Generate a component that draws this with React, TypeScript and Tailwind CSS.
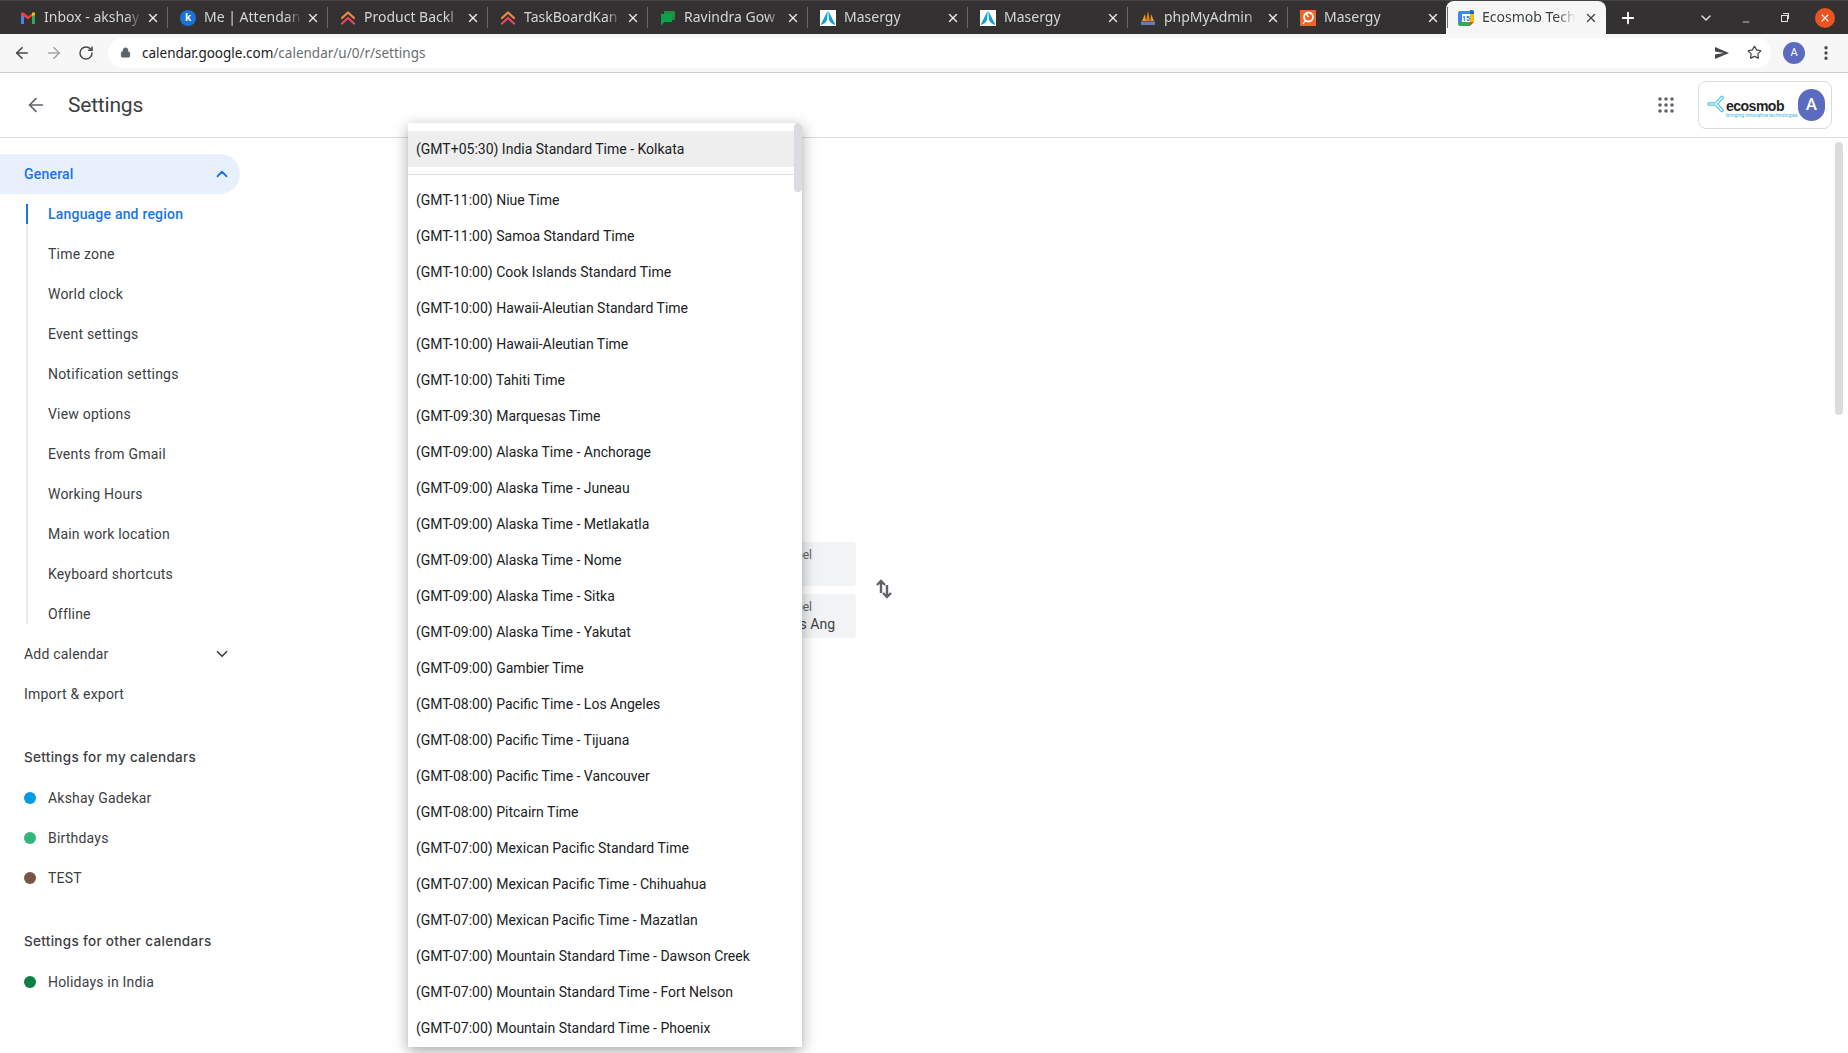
import React from "react";
import { ArrowLeft, ArrowRight, RotateCw, Lock, Star, ChevronUp, ChevronDown, X, Plus, Minus, EllipsisVertical } from "lucide-react";

const Gmail = () => (
  <svg width="16" height="16" viewBox="0 0 16 16" fill="none">
    <path d="M1 14V4l3 2.2V14H2a1 1 0 0 1-1-1z" fill="#4285f4" />
    <path d="M15 14V4l-3 2.2V14h2a1 1 0 0 0 1-1z" fill="#34a853" />
    <path d="M1 5V3.6C1 2.4 2.4 1.8 3.3 2.5L8 6l-.1 3L1 5z" fill="#ea4335" />
    <path d="M4 6.2 8 9.2l4-3V3.4L8 6.4 4 3.4z" fill="#ea4335" />
    <path d="M15 5V3.6c0-1.2-1.4-1.8-2.3-1.1L12 3v3.2L15 5z" fill="#fbbc04" />
  </svg>
);
const Keka = () => (
  <div className="w-4 h-4 rounded-full bg-[#1a73d8] flex items-center justify-center text-white text-[11px] font-bold leading-none font-['Liberation_Sans',sans-serif]">k</div>
);
const Chevrons = () => (
  <svg width="16" height="16" viewBox="0 0 16 16" fill="none" strokeWidth="2.2" strokeLinecap="round" strokeLinejoin="round">
    <path d="M2 8 8 2.5 14 8" stroke="#f58a42" />
    <path d="M2 13.5 8 8l6 5.5" stroke="#ef4565" />
  </svg>
);
const Chat = () => (
  <svg width="16" height="16" viewBox="0 0 16 16">
    <path d="M4 1h10a1 1 0 0 1 1 1v7a1 1 0 0 1-1 1H4z" fill="#1e8e3e" />
    <path d="M1 4h10a1 1 0 0 1 1 1v6a1 1 0 0 1-1 1H4.5L1 15.5z" fill="#0fa04a" />
  </svg>
);
const Masergy = () => (
  <svg width="16" height="16" viewBox="0 0 16 16">
    <rect width="16" height="16" fill="#fff" />
    <path d="M7.6 1 .5 15c3-.4 5.4-2.2 6.6-5.4z" fill="#159fd6" />
    <path d="M8.4 1 15.5 15c-3-.4-5.4-2.2-6.6-5.4z" fill="#159fd6" />
  </svg>
);
const Pma = () => (
  <svg width="16" height="16" viewBox="0 0 16 16">
    <path d="M2 11 5 4l1 7z" fill="#f29a1f" />
    <path d="M6 11 8 1l2 10z" fill="#e8791a" />
    <path d="M10.5 11 11 4l3 7z" fill="#f29a1f" />
    <rect x="1" y="11.5" width="14" height="3.5" fill="#6c78af" />
  </svg>
);
const Clockish = () => (
  <svg width="16" height="16" viewBox="0 0 16 16" fill="none">
    <rect width="16" height="16" fill="#f4622a" />
    <circle cx="8.5" cy="7" r="4.5" stroke="#fff" strokeWidth="1.8" />
    <path d="M8.5 7 6 3.8" stroke="#fff" strokeWidth="1.4" />
    <path d="M3 14c1-2 2-3 3-3.6" stroke="#fff" strokeWidth="1.2" />
  </svg>
);
const Cal = () => (
  <svg width="16" height="16" viewBox="0 0 16 16">
    <rect width="16" height="16" rx="1.5" fill="#fff" />
    <path d="M0 3a2 2 0 0 1 2-2h10v3H4v8H0z" fill="#4285f4" />
    <path d="M12 0h2a2 2 0 0 1 2 2v2h-4z" fill="#1967d2" />
    <rect x="12" y="4" width="4" height="8" fill="#fbbc04" />
    <path d="M0 12h12v4H2a2 2 0 0 1-2-2z" fill="#34a853" />
    <path d="M12 12h4l-4 4z" fill="#ea4335" />
    <text x="8" y="10.5" fontSize="7" fontWeight="700" textAnchor="middle" fill="#1a73e8" fontFamily="Roboto, sans-serif">15</text>
  </svg>
);

const tabs: { icon: React.ReactNode; title: string }[] = [
  { icon: <Gmail />, title: "Inbox - akshay" },
  { icon: <Keka />, title: "Me | Attendan" },
  { icon: <Chevrons />, title: "Product Backl" },
  { icon: <Chevrons />, title: "TaskBoardKan" },
  { icon: <Chat />, title: "Ravindra Gow" },
  { icon: <Masergy />, title: "Masergy" },
  { icon: <Masergy />, title: "Masergy" },
  { icon: <Pma />, title: "phpMyAdmin" },
  { icon: <Clockish />, title: "Masergy" },
];

const settingsItems = [
  "Language and region", "Time zone", "World clock", "Event settings", "Notification settings", "View options",
  "Events from Gmail", "Working Hours", "Main work location", "Keyboard shortcuts", "Offline",
];

const zones = [
  "(GMT-11:00) Niue Time", "(GMT-11:00) Samoa Standard Time", "(GMT-10:00) Cook Islands Standard Time",
  "(GMT-10:00) Hawaii-Aleutian Standard Time", "(GMT-10:00) Hawaii-Aleutian Time", "(GMT-10:00) Tahiti Time",
  "(GMT-09:30) Marquesas Time", "(GMT-09:00) Alaska Time - Anchorage", "(GMT-09:00) Alaska Time - Juneau",
  "(GMT-09:00) Alaska Time - Metlakatla", "(GMT-09:00) Alaska Time - Nome", "(GMT-09:00) Alaska Time - Sitka",
  "(GMT-09:00) Alaska Time - Yakutat", "(GMT-09:00) Gambier Time", "(GMT-08:00) Pacific Time - Los Angeles",
  "(GMT-08:00) Pacific Time - Tijuana", "(GMT-08:00) Pacific Time - Vancouver", "(GMT-08:00) Pitcairn Time",
  "(GMT-07:00) Mexican Pacific Standard Time", "(GMT-07:00) Mexican Pacific Time - Chihuahua",
  "(GMT-07:00) Mexican Pacific Time - Mazatlan", "(GMT-07:00) Mountain Standard Time - Dawson Creek",
  "(GMT-07:00) Mountain Standard Time - Fort Nelson", "(GMT-07:00) Mountain Standard Time - Phoenix",
];

function Tab({ icon, title }: { icon: React.ReactNode; title: string }) {
  return (
    <div className="w-[160px] h-[33px] flex items-center pl-3 pr-2 shrink-0 relative">
      <div className="w-4 h-4 shrink-0 flex items-center justify-center">{icon}</div>
      <div className="ml-2 -mt-[2px] w-[98px] overflow-hidden whitespace-nowrap text-[14px] text-[#d6d6d6] [mask-image:linear-gradient(to_right,black_84%,transparent)]">{title}</div>
      <X className="ml-auto text-[#e8e8e8]" size={14} strokeWidth={2.4} />
      <div className="absolute right-0 top-[6px] h-[21px] w-px bg-[#6a6a6a]" />
    </div>
  );
}

function CalRow({ color, name }: { color: string; name: string }) {
  return (
    <div className="h-5 flex items-center pl-6 gap-3 mt-5 first:mt-0">
      <span className={`w-3 h-3 rounded-full ${color}`} />
      <span className="tracking-[0.2px]">{name}</span>
    </div>
  );
}

export default function App() {
  return (
    <div className="w-[1848px] h-[1053px] overflow-hidden bg-white relative font-['Roboto',sans-serif] text-[14px] text-[#3c4043] flex flex-col">
      {/* tab strip */}
      <div className="h-[34px] bg-[#333132] flex items-center pl-2 font-['Noto_Sans',sans-serif] shrink-0 border-t border-[#454344]">
        {tabs.map((t, i) => <Tab key={i} icon={t.icon} title={t.title} />)}
        <div className="w-[160px] h-[33px] rounded-t-lg bg-[#f7f7f7] flex items-center pl-3 pr-2 shrink-0 -ml-[2px]">
          <div className="w-4 h-4 shrink-0"><Cal /></div>
          <div className="ml-2 -mt-[2px] w-[94px] overflow-hidden whitespace-nowrap text-[14px] text-[#3c4043] [mask-image:linear-gradient(to_right,black_80%,transparent)]">Ecosmob Tech</div>
          <X className="ml-auto text-[#45474a]" size={14} strokeWidth={2.4} />
        </div>
        <Plus className="ml-[13px] text-white" size={18} strokeWidth={2.4} />
        <ChevronDown className="ml-[61px] text-[#e0e0e0]" size={16} strokeWidth={2.2} />
        <Minus className="ml-[27px] mt-2 text-[#e0e0e0]" size={10} strokeWidth={2} />
        <div className="ml-[30px] w-[7px] h-[7px] border border-[#e0e0e0] relative mt-px">
          <div className="absolute -top-[3px] left-[1px] w-[6px] h-[6px] border-t border-r border-[#e0e0e0]" />
        </div>
        <div className="ml-[27px] w-5 h-5 rounded-full bg-[#e95420] flex items-center justify-center">
          <X className="text-white" size={12} strokeWidth={2.2} />
        </div>
      </div>
      {/* toolbar */}
      <div className="h-[39px] bg-[#f7f7f7] border-b border-[#c9c9c9] flex items-center shrink-0">
        <ArrowLeft className="ml-[13px] text-[#45474a]" size={18} strokeWidth={2.2} />
        <ArrowRight className="ml-[14px] text-[#a3a5a8]" size={18} strokeWidth={2.2} />
        <RotateCw className="ml-[15px] text-[#45474a]" size={16} strokeWidth={2.2} />
        <div className="ml-[14px] w-[1663px] h-[30px] -mt-px bg-white rounded-full flex items-center pl-[12px] pr-[9px] font-['Noto_Sans',sans-serif]">
          <Lock className="text-[#5f6368] fill-[#5f6368]" size={11} />
          <div className="ml-[11px] mt-[1px] text-[13.5px] text-[#202124]">calendar.google.com<span className="text-[#6a6d70]">/calendar/u/0/r/settings</span></div>
          <svg className="ml-auto" width="16" height="14" viewBox="0 0 16 14"><path d="M1 1l14 6-14 6V8.5L10 7 1 5.5z" fill="#45474a" /></svg>
          <Star className="ml-[17px] text-[#45474a]" size={15} strokeWidth={2} />
        </div>
        <div className="ml-[12px] w-[22px] h-[22px] rounded-full bg-[#5c6bc0] text-white text-[11px] flex items-center justify-center">A</div>
        <EllipsisVertical className="ml-[12px] text-[#45474a]" size={18} strokeWidth={2.4} />
      </div>
      {/* header */}
      <div className="h-[65px] border-b border-[#dadce0] flex items-center shrink-0">
        <ArrowLeft className="ml-[25px] text-[#5f6368]" size={22} strokeWidth={1.8} />
        <div className="ml-[21px] text-[21px] tracking-[-0.2px] text-[#3c4043] leading-7">Settings</div>
        <svg className="ml-auto" width="16" height="16" viewBox="0 0 16 16" fill="#5f6368">
          {[2, 8, 14].map((y) => [2, 8, 14].map((x) => <circle key={`${x}${y}`} cx={x} cy={y} r="1.8" />))}
        </svg>
        <div className="ml-[24px] mr-4 w-[134px] h-[48px] rounded-lg border border-[#dadce0] flex items-center pl-[8px] relative">
          <svg className="shrink-0 -mt-[3px]" width="19" height="18" viewBox="0 0 19 18" fill="none" strokeLinecap="round" strokeLinejoin="round">
            <path d="M2 9h7l6-6.5M9 9l6 6.5" stroke="#4cc3e6" strokeWidth="3.6" />
            <path d="M2 9h7l6-6.5M9 9l6 6.5" stroke="#ffffff" strokeWidth="1.2" />
          </svg>
          <div className="mt-[7px] flex flex-col leading-none items-start">
            <span className="text-[14px] font-bold tracking-[-0.5px] text-[#222] font-['Liberation_Sans',sans-serif]">ecosmob</span>
            <span className="text-[5px] text-[#3fb8dc] whitespace-nowrap">bringing innovative technologies</span>
          </div>
          <div className="ml-auto mr-[6px] w-8 h-8 rounded-full bg-[#5c6bc0] text-white text-[17px] font-medium flex items-center justify-center">A</div>
        </div>
      </div>
      {/* body */}
      <div className="flex flex-1 min-h-0">
        <nav className="w-[240px] pt-4 shrink-0 tracking-[0.2px]">
          <div className="h-10 rounded-r-[20px] bg-[#e8f0fe] text-[#1a73e8] font-medium flex items-center pl-6 pr-[9px] justify-between">
            <span>General</span>
            <ChevronUp size={18} strokeWidth={2.4} />
          </div>
          <ul className="mt-[10px] ml-[26px] border-l-2 border-[#e8eaed] relative flex flex-col gap-5">
            <span className="absolute -left-[2px] top-0 h-5 w-[2px] bg-[#1a73e8]" />
            {settingsItems.map((s, i) => (
              <li key={s} className={`h-5 flex items-center pl-[20px] ${i === 0 ? "text-[#1a73e8] font-medium" : ""}`}>{s}</li>
            ))}
          </ul>
          <div className="mt-5 h-5 flex items-center justify-between pl-6 pr-[9px]">
            <span>Add calendar</span>
            <ChevronDown size={18} strokeWidth={2.2} />
          </div>
          <div className="mt-5 h-5 flex items-center pl-6">Import &amp; export</div>
          <div className="mt-[43px] pl-6 h-5 flex items-center font-medium tracking-[0.3px] font-['Inter',sans-serif] text-[13.5px]">Settings for my calendars</div>
          <div className="mt-[21px]">
            <CalRow color="bg-[#039be5]" name="Akshay Gadekar" />
            <CalRow color="bg-[#33b679]" name="Birthdays" />
            <CalRow color="bg-[#795548]" name="TEST" />
          </div>
          <div className="mt-[43px] pl-6 h-5 flex items-center font-medium tracking-[0.3px] font-['Inter',sans-serif] text-[13.5px]">Settings for other calendars</div>
          <div className="mt-[21px]">
            <CalRow color="bg-[#0b8043]" name="Holidays in India" />
          </div>
        </nav>
        <main className="flex-1 pt-[404px] pl-[476px] flex items-center self-start">
          <div className="flex flex-col gap-2 w-[140px]">
            <div className="h-11 bg-[#f1f3f4] rounded pt-[5px] pr-[44px] text-right text-[12px] leading-4 text-[#5f6368]">Label</div>
            <div className="h-11 bg-[#f1f3f4] rounded pt-[5px] pr-[21px] text-right overflow-hidden">
              <div className="text-[12px] leading-4 pr-[23px] text-[#5f6368]">Label</div>
              <div className="text-[14px] leading-[19px] text-[#3c4043] whitespace-nowrap">Los Ang</div>
            </div>
          </div>
          <svg className="ml-[20px] mb-[3px]" width="16" height="20" viewBox="0 0 16 20" fill="none" stroke="#5f6368" strokeWidth="2.4">
            <path d="M5 14V2M1 6l4-4 4 4" />
            <path d="M11 6v12M7 14l4 4 4-4" />
          </svg>
        </main>
        <div className="ml-auto mr-[5px] mt-[4px] w-[8px] h-[273px] rounded-full bg-[#dadce0] shrink-0" />
      </div>
      {/* dropdown */}
      <div className="absolute left-[408px] top-[123px] w-[394px] h-[924px] bg-white shadow-[0_4px_14px_rgba(0,0,0,0.35)] overflow-hidden text-[#202124]">
        <div className="pt-2">
          <div className="h-9 bg-[#eeeeee] flex items-center pl-2">(GMT+05:30) India Standard Time - Kolkata</div>
          <div className="mt-[7px] mb-[7px] h-px bg-[#e0e0e0]" />
          {zones.map((z) => (
            <div key={z} className="h-9 flex items-center pl-2 whitespace-nowrap">{z}</div>
          ))}
        </div>
        <div className="absolute right-0 top-0 w-2 h-[69px] rounded-full bg-[#dadce0]" />
      </div>
    </div>
  );
}
